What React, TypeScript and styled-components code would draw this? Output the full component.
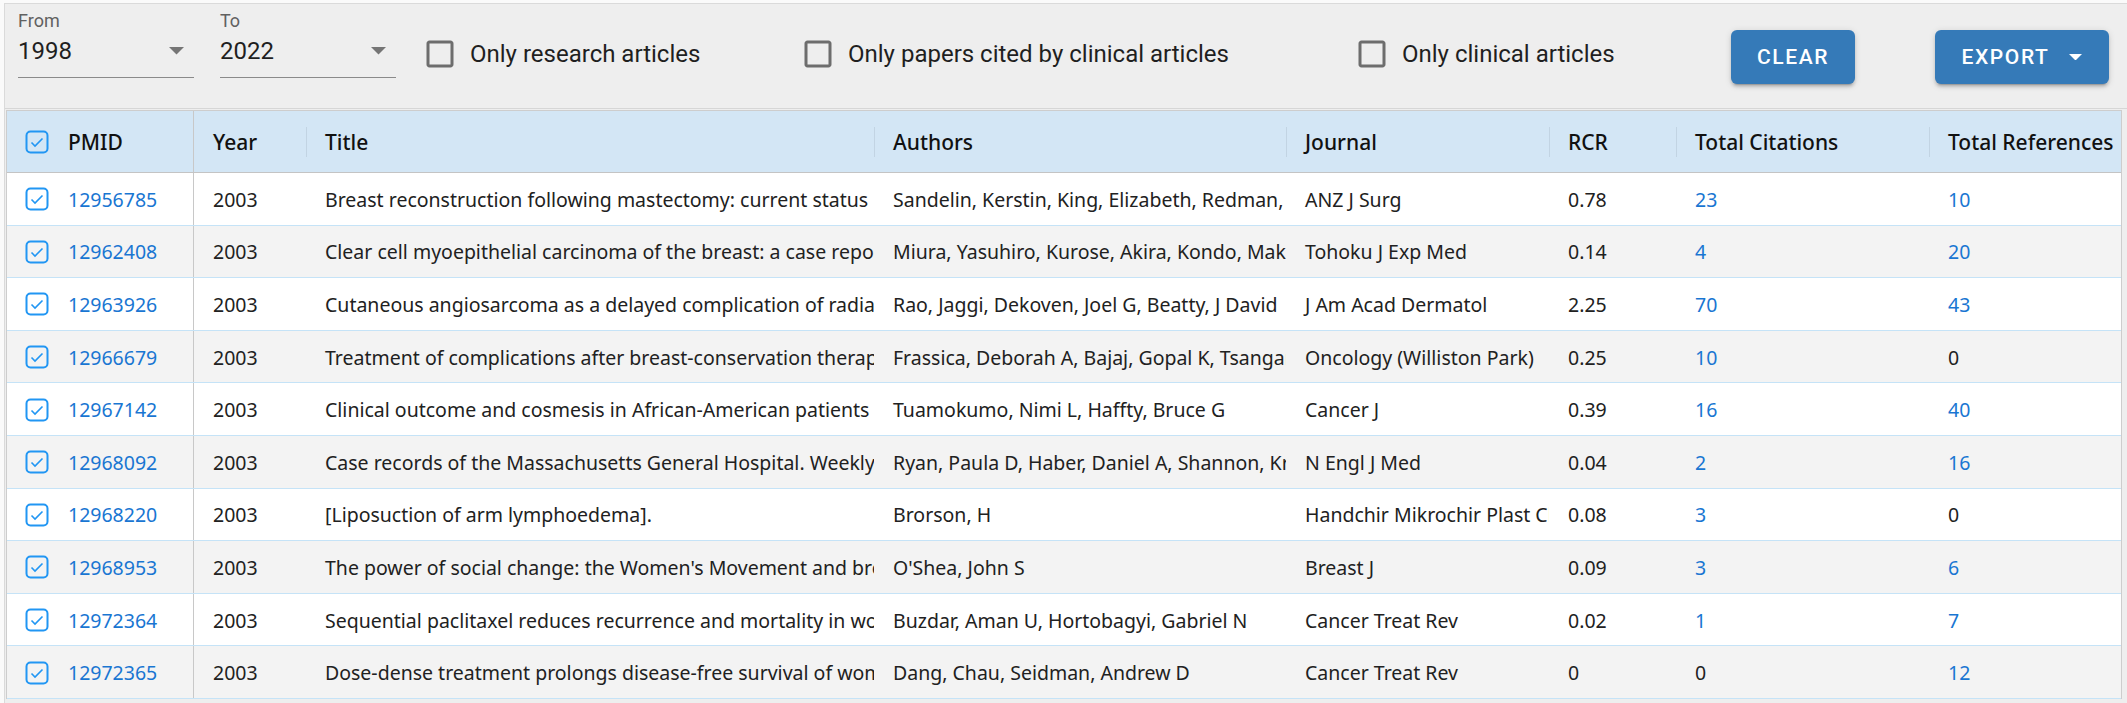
import React from "react";
import styled, { createGlobalStyle } from "styled-components";

const GlobalStyle = createGlobalStyle`
  html, body { margin: 0; padding: 0; background: #fafafa; overflow: hidden; }
  * { box-sizing: border-box; }
`;

const COLS = "187px 112px 568px 412px 263px 127px 253px 1fr";

const Page = styled.div`
  padding: 3px 0 0 4px;
  width: 2127px;
  height: 703px;
  overflow: hidden;
`;

const Panel = styled.div`
  background: #eeeeee;
  border-top: 1px solid #dadada;
  border-left: 1px solid #dadada;
  height: 700px;
`;

const Toolbar = styled.div`
  display: flex;
  align-items: flex-start;
  height: 105px;
  padding-left: 13px;
  border-bottom: 1px solid #d6d6d6;
  font-family: Roboto, "Liberation Sans", sans-serif;
`;

const SelectBox = styled.div<{ $ml?: number }>`
  width: 176px;
  margin-top: 8px;
  margin-left: ${(p) => p.$ml ?? 0}px;
  display: flex;
  flex-direction: column;
`;

const SelectLabel = styled.div`
  font-size: 18px;
  line-height: 18px;
  color: #616161;
`;

const SelectValue = styled.div`
  display: flex;
  align-items: center;
  justify-content: space-between;
  padding: 9px 10px 14px 0;
  line-height: 24px;
  font-size: 24px;
  color: #1f1f1f;
  border-bottom: 1px solid #8a8a8a;
`;

const CheckControl = styled.label<{ $w: number; $ml?: number }>`
  display: flex;
  align-items: center;
  gap: 12.5px;
  width: ${(p) => p.$w}px;
  margin-left: ${(p) => p.$ml ?? 0}px;
  margin-top: 32px;
  height: 36px;
  font-size: 24px;
  color: #1f1f1f;
  white-space: nowrap;
`;

const Button = styled.button<{ $w: number; $ml?: number }>`
  width: ${(p) => p.$w}px;
  height: 54px;
  margin-top: 26px;
  margin-left: ${(p) => p.$ml ?? 0}px;
  border: none;
  border-radius: 6px;
  background: #357ab8;
  color: #ffffff;
  font-family: Roboto, "Liberation Sans", sans-serif;
  font-weight: 500;
  font-size: 21px;
  letter-spacing: 1.6px;
  display: flex;
  align-items: center;
  justify-content: center;
  gap: 20px;
  box-shadow: 0 4px 1.5px -3px rgba(0, 0, 0, 0.2), 0 3px 3px 0 rgba(0, 0, 0, 0.14),
    0 1.5px 7.5px 0 rgba(0, 0, 0, 0.12);
  padding: 0;
`;

const TableWrap = styled.div`
  margin: 1px 5px 0 1px;
  border: 1px solid #cdcdcd;
  border-bottom: none;
  background: #ffffff;
  font-family: "Noto Sans", "Open Sans", sans-serif;
`;

const HeaderRow = styled.div`
  display: grid;
  grid-template-columns: ${COLS};
  height: 62px;
  background: #d3e6f5;
  border-bottom: 1px solid #c4c4c4;
`;

const HeaderCell = styled.div<{ $sep?: boolean; $first?: boolean }>`
  position: relative;
  display: flex;
  align-items: center;
  gap: 19px;
  padding-left: ${(p) => (p.$first ? 18 : 19)}px;
  padding-top: 1px;
  font-size: 21px;
  font-weight: 500;
  color: #111;
  white-space: nowrap;
  overflow: hidden;
  ${(p) => (p.$first ? "border-right: 1px solid #c8c8c8;" : "")}
  &::before {
    content: "";
    display: ${(p) => (p.$sep ? "block" : "none")};
    position: absolute;
    left: 0;
    top: 16px;
    width: 1px;
    height: 30px;
    background: #c2d4e3;
  }
`;

const Row = styled.div<{ $alt: boolean }>`
  display: grid;
  grid-template-columns: ${COLS};
  height: 52.6px;
  background: ${(p) => (p.$alt ? "#f3f3f3" : "#ffffff")};
  border-bottom: 1px solid #c5e3f7;
`;

const Cell = styled.div<{ $first?: boolean }>`
  display: flex;
  align-items: center;
  gap: 19px;
  padding-left: ${(p) => (p.$first ? 18 : 19)}px;
  padding-right: 5px;
  padding-top: 1px;
  font-size: 19.5px;
  color: #212121;
  white-space: nowrap;
  overflow: hidden;
  ${(p) => (p.$first ? "border-right: 1px solid #c8c8c8;" : "")}
`;

const Link = styled.span`
  color: #1976d2;
`;

const ArrowDown = ({ w, color }: { w: number; color: string }) => (
  <svg width={w} height={w / 2} viewBox="7 10 10 5" style={{ display: "block" }}>
    <path d="M7 10l5 5 5-5z" fill={color} />
  </svg>
);

const OutlineBox = () => (
  <svg width={36} height={36} viewBox="0 0 24 24" style={{ display: "block", flex: "none" }}>
    <path
      fill="rgba(0,0,0,0.54)"
      d="M19 5v14H5V5h14m0-2H5c-1.11 0-2 .9-2 2v14c0 1.1.89 2 2 2h14c1.1 0 2-.9 2-2V5c0-1.1-.9-2-2-2z"
    />
  </svg>
);

const TableCheck = () => (
  <svg width={24} height={24} viewBox="0 0 24 24" style={{ display: "block", flex: "none" }}>
    <rect x="1.5" y="1.5" width="21" height="21" rx="4" fill="none" stroke="#2196f3" strokeWidth="2" />
    <path d="M6.5 12.5l3.5 3.5 7.5-7.5" fill="none" stroke="#2196f3" strokeWidth="1.6" />
  </svg>
);

type Rec = {
  pmid: string;
  title: string;
  authors: string;
  journal: string;
  rcr: string;
  cit: string;
  refs: string;
};

const rows: Rec[] = [
  { pmid: "12956785", title: "Breast reconstruction following mastectomy: current status", authors: "Sandelin, Kerstin, King, Elizabeth, Redman, Sally", journal: "ANZ J Surg", rcr: "0.78", cit: "23", refs: "10" },
  { pmid: "12962408", title: "Clear cell myoepithelial carcinoma of the breast: a case report", authors: "Miura, Yasuhiro, Kurose, Akira, Kondo, Makoto", journal: "Tohoku J Exp Med", rcr: "0.14", cit: "4", refs: "20" },
  { pmid: "12963926", title: "Cutaneous angiosarcoma as a delayed complication of radiation therapy", authors: "Rao, Jaggi, Dekoven, Joel G, Beatty, J David", journal: "J Am Acad Dermatol", rcr: "2.25", cit: "70", refs: "43" },
  { pmid: "12966679", title: "Treatment of complications after breast-conservation therapy", authors: "Frassica, Deborah A, Bajaj, Gopal K, Tsangaris, Theodore N", journal: "Oncology (Williston Park)", rcr: "0.25", cit: "10", refs: "0" },
  { pmid: "12967142", title: "Clinical outcome and cosmesis in African-American patients", authors: "Tuamokumo, Nimi L, Haffty, Bruce G", journal: "Cancer J", rcr: "0.39", cit: "16", refs: "40" },
  { pmid: "12968092", title: "Case records of the Massachusetts General Hospital. Weekly clinicopathological exercises", authors: "Ryan, Paula D, Haber, Daniel A, Shannon, Kristen M", journal: "N Engl J Med", rcr: "0.04", cit: "2", refs: "16" },
  { pmid: "12968220", title: "[Liposuction of arm lymphoedema].", authors: "Brorson, H", journal: "Handchir Mikrochir Plast Chir", rcr: "0.08", cit: "3", refs: "0" },
  { pmid: "12968953", title: "The power of social change: the Women's Movement and breast cancer", authors: "O'Shea, John S", journal: "Breast J", rcr: "0.09", cit: "3", refs: "6" },
  { pmid: "12972364", title: "Sequential paclitaxel reduces recurrence and mortality in women", authors: "Buzdar, Aman U, Hortobagyi, Gabriel N", journal: "Cancer Treat Rev", rcr: "0.02", cit: "1", refs: "7" },
  { pmid: "12972365", title: "Dose-dense treatment prolongs disease-free survival of women", authors: "Dang, Chau, Seidman, Andrew D", journal: "Cancer Treat Rev", rcr: "0", cit: "0", refs: "12" },
];

const Num = ({ v }: { v: string }) => (v === "0" ? <span>{v}</span> : <Link>{v}</Link>);

export default function App() {
  return (
    <>
      <GlobalStyle />
      <Page>
        <Panel>
          <Toolbar>
            <SelectBox>
              <SelectLabel>From</SelectLabel>
              <SelectValue>
                1998
                <ArrowDown w={15} color="#757575" />
              </SelectValue>
            </SelectBox>
            <SelectBox $ml={26}>
              <SelectLabel>To</SelectLabel>
              <SelectValue>
                2022
                <ArrowDown w={15} color="#757575" />
              </SelectValue>
            </SelectBox>
            <CheckControl $w={378} $ml={25.5}>
              <OutlineBox />
              Only research articles
            </CheckControl>
            <CheckControl $w={554}>
              <OutlineBox />
              Only papers cited by clinical articles
            </CheckControl>
            <CheckControl $w={377.5}>
              <OutlineBox />
              Only clinical articles
            </CheckControl>
            <Button $w={124}>CLEAR</Button>
            <Button $w={174} $ml={80}>
              EXPORT
              <ArrowDown w={13} color="#ffffff" />
            </Button>
          </Toolbar>
          <TableWrap>
            <HeaderRow>
              <HeaderCell $first>
                <TableCheck />
                PMID
              </HeaderCell>
              <HeaderCell>Year</HeaderCell>
              <HeaderCell $sep>Title</HeaderCell>
              <HeaderCell $sep>Authors</HeaderCell>
              <HeaderCell $sep>Journal</HeaderCell>
              <HeaderCell $sep>RCR</HeaderCell>
              <HeaderCell $sep>Total Citations</HeaderCell>
              <HeaderCell $sep>Total References</HeaderCell>
            </HeaderRow>
            {rows.map((r, i) => (
              <Row key={r.pmid} $alt={i % 2 === 1}>
                <Cell $first>
                  <TableCheck />
                  <Link>{r.pmid}</Link>
                </Cell>
                <Cell>2003</Cell>
                <Cell>{r.title}</Cell>
                <Cell>{r.authors}</Cell>
                <Cell>{r.journal}</Cell>
                <Cell>{r.rcr}</Cell>
                <Cell>
                  <Num v={r.cit} />
                </Cell>
                <Cell>
                  <Num v={r.refs} />
                </Cell>
              </Row>
            ))}
          </TableWrap>
        </Panel>
      </Page>
    </>
  );
}
